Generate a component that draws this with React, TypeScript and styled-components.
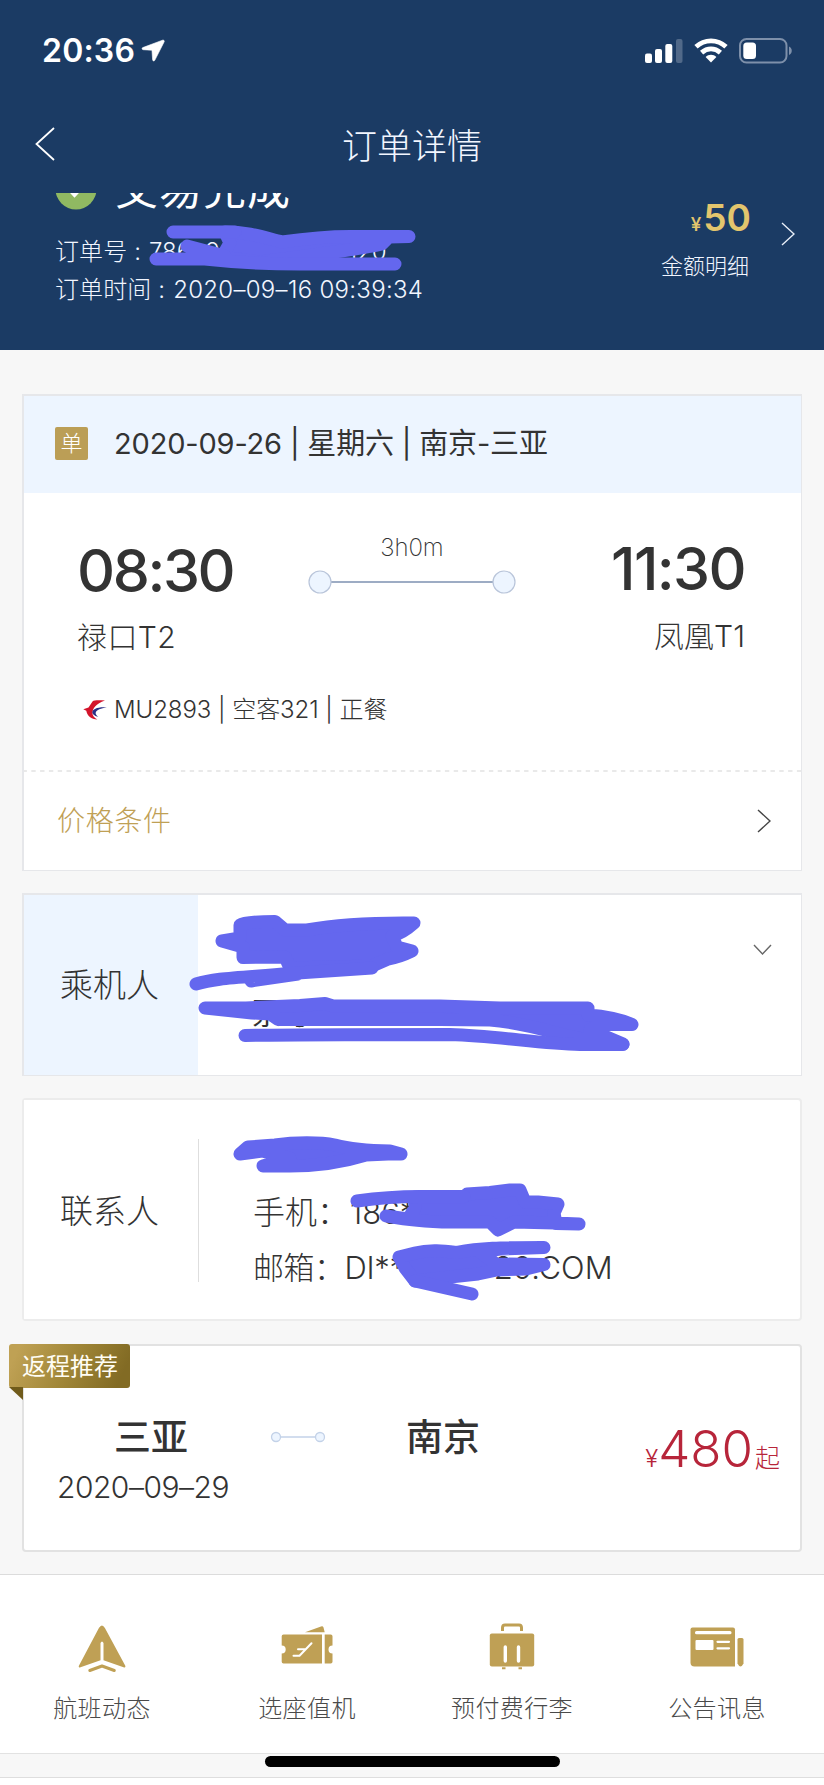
import React from "react";
import styled, { createGlobalStyle } from "styled-components";

const navy = "#1b3b64";
const gold = "#bfa055";
const ink = "#333333";
const pale = "#edf5ff";

const GlobalStyle = createGlobalStyle`
  * { box-sizing: border-box; }
  body { margin: 0; background: #f7f7f7; }
  svg { display: block; flex: none; }
`;

const Page = styled.div`
  position: relative;
  width: 824px;
  height: 1785px;
  display: flex;
  flex-direction: column;
  overflow: hidden;
  background: #f7f7f7;
  color: ${ink};
  font-family: Inter, "Noto Sans CJK SC", sans-serif;
  font-weight: 300;
`;

const Text = styled.span<{
  $size: number;
  $line?: number;
  $weight?: number;
  $track?: number;
  $color?: string;
  $ml?: number;
}>`
  display: block;
  white-space: pre;
  font-size: ${(p) => p.$size}px;
  line-height: ${(p) => p.$line ?? 40}px;
  font-weight: ${(p) => p.$weight ?? 300};
  letter-spacing: ${(p) => p.$track ?? 0}px;
  color: ${(p) => p.$color ?? "inherit"};
  margin-left: ${(p) => p.$ml ?? 0}px;
`;

const Header = styled.header`
  height: 350px;
  flex: none;
  background: ${navy};
  color: #f2f6ff;
`;

const StatusBar = styled.div`
  height: 101px;
  display: flex;
  align-items: center;
  padding: 0 31px 0 42px;
`;

const StatusIcons = styled.div`
  margin-left: auto;
  display: flex;
  align-items: center;
  gap: 11px;
`;

const NavBar = styled.div`
  height: 92px;
  display: grid;
  grid-template-columns: 100px 1fr 100px;
  align-items: center;
  justify-items: center;
  padding-bottom: 3px;
`;

const BackButton = styled.div`
  justify-self: start;
  padding: 0 0 3px 35px;
`;

const Overview = styled.div`
  height: 156px;
  overflow: hidden;
  display: flex;
  padding: 0 29px 0 55px;
`;

const OverviewInfo = styled.div`
  margin-top: -26px;
`;

const StatusLine = styled.div`
  display: flex;
  align-items: center;
  height: 44px;
  margin-bottom: 22px;
`;

const InfoLine = styled.div`
  display: flex;
`;

const Amount = styled.div`
  margin: 5px 0 0 auto;
  display: flex;
  flex-direction: column;
  align-items: flex-end;
`;

const Price = styled.div<{ $color: string; $shift?: number }>`
  display: flex;
  align-items: baseline;
  margin-right: ${(p) => -(p.$shift ?? 0)}px;
  color: ${(p) => p.$color};
`;

const AmountArrow = styled.div`
  padding: 29px 0 0 32px;
`;

const Cards = styled.main`
  flex: 1;
  padding: 44px 22px 0;
`;

const Card = styled.section<{ $height: number; $gap: number; $round?: boolean }>`
  height: ${(p) => p.$height}px;
  margin-bottom: ${(p) => p.$gap}px;
  background: #fff;
  border: 2px solid #e6e7ea;
  border-width: ${(p) => (p.$round ? "2px" : "2px 1px 1px 2px")};
  border-radius: ${(p) => (p.$round ? 4 : 0)}px;
`;

const ContactCard = styled(Card)`
  border-color: #ececec;
`;

const FlightHead = styled.div`
  height: 97px;
  display: flex;
  align-items: center;
  padding: 0 0 2px 31px;
  background: ${pale};
`;

const TripBadge = styled.div`
  width: 33px;
  height: 33px;
  border-radius: 2px;
  display: flex;
  justify-content: center;
  background: #bb9e56;
  margin-right: 26px;
`;

const FlightBody = styled.div`
  height: 277px;
  padding: 47px 56px 0 53px;
`;

const Route = styled.div`
  display: flex;
  justify-content: space-between;
  height: 150px;
`;

const Stop = styled.div<{ $end?: boolean }>`
  display: flex;
  flex-direction: column;
  gap: 15px;
  align-items: ${(p) => (p.$end ? "flex-end" : "flex-start")};
  width: 230px;
`;

const Duration = styled.div`
  width: 208px;
  display: flex;
  flex-direction: column;
  align-items: center;
  gap: 6px;
  margin: -8px 0 0 1px;
`;

const PlaneLine = styled.div`
  display: flex;
  align-items: center;
  padding-left: 6px;
`;

const PriceRow = styled.div`
  height: 98px;
  display: flex;
  align-items: center;
  justify-content: space-between;
  padding: 0 30px 0 33px;
`;

const CardRow = styled.div`
  display: flex;
  height: 100%;
`;

const SideLabel = styled.div<{ $tint?: boolean }>`
  width: 174px;
  padding: ${(p) => (p.$tint ? 0 : 3)}px 0 0 36px;
  display: flex;
  align-items: center;
  background: ${(p) => (p.$tint ? pale : "#fff")};
`;

const Divider = styled.div`
  width: 1px;
  background: #dedede;
  margin: 39px 0 37px;
`;

const Details = styled.div<{ $top: number }>`
  flex: 1;
  padding: ${(p) => p.$top}px 0 0 54px;
`;

const DetailLine = styled.div<{ $height: number }>`
  display: flex;
  align-items: center;
  height: ${(p) => p.$height}px;
`;

const ExpandArrow = styled.div`
  padding: 49px 29px 0 0;
`;

const ReturnCard = styled(Card)`
  position: relative;
  display: flex;
  border-color: #e2e2e2;
`;

const Ribbon = styled.div`
  position: absolute;
  left: -15px;
  top: -2px;
  width: 121px;
  height: 44px;
  border-radius: 3px;
  padding-left: 13px;
  background: linear-gradient(115deg, #bfa154 8%, #a08637 50%, #826b24 90%);
`;

const RibbonFold = styled.svg`
  position: absolute;
  left: 0;
  top: 43px;
`;

const City = styled.div<{ $width: number }>`
  width: ${(p) => p.$width}px;
  padding: 72px 0 0 33px;
  display: flex;
  flex-direction: column;
  gap: 9px;
`;

const MiniRoute = styled.div`
  padding-top: 85px;
  width: 137px;
`;

const Fare = styled.div`
  margin: 65px 20px 0 auto;
`;

const TabBar = styled.nav`
  height: 180px;
  flex: none;
  display: flex;
  background: #fff;
  border-top: 1px solid #dcdcdc;
  border-bottom: 1px solid #e2e2e2;
`;

const Tab = styled.div`
  width: 205px;
  display: flex;
  flex-direction: column;
  align-items: center;
  padding: 48px 1px 0 0;
`;

const HomeArea = styled.div`
  height: 24px;
  flex: none;
  display: flex;
  justify-content: center;
  padding-top: 2px;
  border-bottom: 1px solid #dedede;
`;

const HomeIndicator = styled.div`
  width: 295px;
  height: 11px;
  border-radius: 6px;
  background: #000;
`;

const BottomStrip = styled.div`
  height: 7px;
  flex: none;
  background: #fff;
`;

const Marker = styled.svg`
  position: absolute;
  left: 0;
  top: 0;
  pointer-events: none;
`;

const ArrowGlyph = styled.svg`
  margin-left: 6px;
`;

const LocationArrow = () => (
  <ArrowGlyph width="24" height="24" viewBox="0 0 24 24">
    <path d="M21.500 1.200 1.800 8.600c-1.200.5-.9 2 .3 2.100l8.300.5c.4 0 .6.2.6.6l.6 8.900c.1 1.400 1.700 1.700 2.300.4L23.200 2.700c.4-1-.6-1.900-1.700-1.500z" fill="#fff" stroke="#fff" strokeWidth=".6" />
  </ArrowGlyph>
);

const SignalIcon = () => (
  <svg width="38" height="24" viewBox="0 0 38 24" fill="#fff">
    <rect x="0" y="14.500" width="7" height="9.500" rx="2" />
    <rect x="10" y="10" width="7" height="14" rx="2" />
    <rect x="20.300" y="5" width="7" height="19" rx="2" />
    <rect x="31" y="0" width="6.500" height="24" rx="2" opacity=".24" />
  </svg>
);

const WifiIcon = () => (
  <svg width="34" height="25" viewBox="0 0 34 25" fill="none" stroke="#fff">
    <path d="M2 8.800C10.500.8 23.500.8 32 8.800" strokeWidth="4.800" />
    <path d="M7.600 14.600c5.600-5 13.200-5 18.800 0" strokeWidth="4.800" />
    <path d="M17 24.500l-5.400-5.600c3-2.800 7.800-2.800 10.800 0z" fill="#fff" stroke="none" />
  </svg>
);

const BatteryIcon = () => (
  <svg width="54" height="26" viewBox="0 0 54 26">
    <rect x="1" y="1" width="46.500" height="23.500" rx="6.500" fill="none" stroke="#7e90aa" strokeWidth="2" />
    <rect x="4.300" y="4.500" width="12.700" height="16.500" rx="3.500" fill="#fff" />
    <path d="M50 8.500c3.700 1.200 3.700 7.300 0 8.500z" fill="#7e90aa" />
  </svg>
);

const Chevron = ({ w, h, d, color, width = 1.4 }: { w: number; h: number; d: string; color: string; width?: number }) => (
  <svg width={w} height={h} viewBox={`0 0 ${w} ${h}`} fill="none" stroke={color} strokeWidth={width}>
    <path d={d} />
  </svg>
);

const CheckCircle = () => (
  <svg width="42" height="42" viewBox="0 0 42 42">
    <circle cx="21" cy="21" r="20.500" fill="#90b962" />
    <path d="M11 18.500l8.500 9L28 18.500" fill="none" stroke="#fff" strokeWidth="3" />
  </svg>
);

const FlightPath = () => (
  <svg width="208" height="24" viewBox="0 0 208 24">
    <path d="M23 12h162" stroke="#7c90b0" strokeWidth="1.300" />
    <circle cx="12" cy="12" r="11" fill={pale} stroke="#b9c5da" strokeWidth="1.200" />
    <circle cx="196" cy="12" r="11" fill={pale} stroke="#b9c5da" strokeWidth="1.200" />
  </svg>
);

const AirlineLogo = () => (
  <svg width="24" height="20" viewBox="0 0 24 20">
    <path d="M22 .5C16 .3 11 0 9.500 1.500L5.500 7.500.3 9.200l3 1.600c.8 5 5 8.500 11 8.700-3.300-2-5.300-4.500-4.800-7.500C10 8.500 12.500 4 22 .5z" fill="#d3142b" />
    <path d="M23.800 7.300C15 6.500 9.500 9 9.300 12.200c0 2 3 4 6 4.600-2-1.500-3.100-3-2.500-4.500.8-2.200 5-4 11-5z" fill="#2a2f85" />
  </svg>
);

const DashLine = () => (
  <svg width="777" height="2" viewBox="0 0 777 2">
    <path d="M0 1h777" stroke="#e2e2e2" strokeWidth="1.500" strokeDasharray="4.400 4.400" strokeDashoffset="1.500" />
  </svg>
);

const MiniPath = () => (
  <svg width="56" height="12" viewBox="0 0 56 12" fill={pale} stroke="#c3d2e8" strokeWidth="1.300">
    <path d="M10 6h36" />
    <circle cx="6" cy="6" r="4.500" />
    <circle cx="50" cy="6" r="4.500" />
  </svg>
);

const PlaneIcon = () => (
  <svg width="50" height="50" viewBox="0 0 50 50">
    <path d="M21.900 5Q25 0 27.900 5L48.300 42.800Q49 45 46.500 44.200L26.500 37.200V20Q25 17 23.500 20V37.200L3.500 44.200Q1 45 1.900 42.800Z" fill={gold} />
    <path d="M12.800 47.500L25 43l12.300 4.500" fill="none" stroke={gold} strokeWidth="3" strokeLinecap="round" strokeLinejoin="round" />
  </svg>
);

const TicketIcon = () => (
  <svg width="52" height="50" viewBox="0 0 52 50">
    <path d="M24 9.200L40 3.400q2-.7 2.500 1.200l1.200 4.600z" fill={gold} />
    <path d="M2.500 11.500H41V40.500H2.500Q.7 40.500.7 38.700V30.500a3.800 3.800 0 0 0 0-8V13.300q0-1.800 1.800-1.800zM43.700 11.500h6q1.800 0 1.800 1.800v9.200a3.800 3.800 0 0 0 0 8v8.200q0 1.800-1.800 1.800h-6z" fill={gold} />
    <path d="M12.500 32.800h6L30.500 20.200M17 26.200h7.500" fill="none" stroke="#fff" strokeWidth="2" strokeLinecap="round" strokeLinejoin="round" />
  </svg>
);

const LuggageIcon = () => (
  <svg width="46" height="50" viewBox="0 0 46 50">
    <path d="M13.500 8V4.800Q13.500 2 16 2h14q2.500 0 2.500 2.800V8" fill="none" stroke={gold} strokeWidth="3" />
    <rect x=".8" y="10.500" width="44.400" height="33" rx="2" fill={gold} />
    <path d="M16.300 24v14M29.500 24v14" stroke="#fff" strokeWidth="3.400" strokeLinecap="round" />
    <path d="M13 45.300h3.500M29.500 45.300H33" stroke={gold} strokeWidth="2" />
  </svg>
);

const NewsIcon = () => (
  <svg width="54" height="50" viewBox="0 0 54 50">
    <path d="M2.500 4.500H43q2 0 2 2V43.500H4.500Q.5 43.500.5 39.500V6.500q0-2 2-2z" fill={gold} />
    <path d="M47.500 16.500q0-1.500 1.500-1.500h3q1.500 0 1.500 1.500V40.500q-3 6-6 0z" fill={gold} />
    <rect x="5" y="8" width="36.500" height="3.300" rx="1.500" fill="#fff" />
    <rect x="5.500" y="17" width="18" height="10" rx="1" fill="#fff" />
    <path d="M27.500 18.800h11.500M27.500 25.300h11.500" stroke="#fff" strokeWidth="2.200" strokeLinecap="round" />
  </svg>
);

const tabs = [
  { label: "航班动态", Icon: PlaneIcon },
  { label: "选座值机", Icon: TicketIcon },
  { label: "预付费行李", Icon: LuggageIcon },
  { label: "公告讯息", Icon: NewsIcon },
];

const solidStrokes = [
  "M225 232C250 232 265 238 282 242C310 238 330 236.500 350 236.500H409L389 237L382 244C360 249 340 251 320 254L260 262L222 257L230 243Z",
  "M240 925Q245 921.500 275 921.500L285 930L307 930C340 924 370 922.500 414 923Q403 933 392 936L397 947L412 951Q400 957 388 959L372 966L290 968L285 957L243 957.500L243 947L222 941L240 938Z",
  "M205 1008L246 1008L300 1005.500L325 1003.500L333 1006H440L500 1008H588V1015Q615 1017 632 1024.500L600 1024.500L590 1030L623 1044L590 1040C560 1036 530 1023 490 1020L440 1019.500H278L270 1014L252 1013Z",
  "M240 1154L248 1147L275 1145C295 1142 320 1142 335 1145C350 1149 365 1150.500 390 1151L401 1154L388 1154L366 1155C340 1163 310 1166 290 1166H263L290 1158L262 1151Z",
  "M415 1197H464L467 1194L490 1192.500L510 1190H520L525 1202L538 1202L558 1204L554 1213L556 1223.500L579 1224L555 1223L514 1222L498 1230L490 1222H442C420 1221 400 1219 386 1216L408 1219L415 1208Z",
  "M399 1257L415 1253C430 1249 445 1251 457 1252.500C480 1248 500 1247.500 544 1247.500L500 1249L480 1252L496 1264L544 1264.500L526 1269L497 1270L478 1274L450 1277L415 1281L405 1268Z",
];

const lineStrokes = [
  "M173 232H235M187 246L225 256M156 259H205C250 264 280 264 300 264H395",
  "M196 984C215 978 235 978 290 973.500L372 968M251 981L298 974",
  "M245 1035.500C300 1034.500 400 1034.500 450 1034.500C500 1036 540 1044 580 1044.500H623",
  "M357 1201C385 1197 400 1196.500 420 1196.500H464M415 1281L472 1294",
];

const MarkerStrokes = () => (
  <Marker width="824" height="1785" viewBox="0 0 824 1785" stroke="#6467ee" strokeWidth="13" strokeLinecap="round" strokeLinejoin="round">
    {solidStrokes.map((d) => (
      <path key={d} d={d} fill="#6467ee" />
    ))}
    {lineStrokes.map((d) => (
      <path key={d} d={d} fill="none" />
    ))}
  </Marker>
);

export default function App() {
  return (
    <Page>
      <GlobalStyle />
      <Header>
        <StatusBar>
          <Text $size={32} $weight={600} $track={0.2} $color="#fff">20:36</Text>
          <LocationArrow />
          <StatusIcons>
            <SignalIcon />
            <WifiIcon />
            <BatteryIcon />
          </StatusIcons>
        </StatusBar>
        <NavBar>
          <BackButton>
            <Chevron w={20} h={34} d="M19 1L1.500 17L19 33" color="#fff" width={1.8} />
          </BackButton>
          <Text $size={35}>订单详情</Text>
        </NavBar>
        <Overview>
          <OverviewInfo>
            <StatusLine>
              <CheckCircle />
              <Text $size={43} $weight={400} $track={1} $line={44} $ml={18} $color="#fff">交易完成</Text>
            </StatusLine>
            <InfoLine>
              <Text $size={24} $line={38} $track={0.1}>订单号 :</Text>
              <Text $size={24} $line={38} $ml={8}>786</Text>
              <Text $size={24} $line={38} $ml={14}>9</Text>
              <Text $size={24} $line={38} $ml={128}>120</Text>
            </InfoLine>
            <InfoLine>
              <Text $size={24} $line={38} $track={0.1}>订单时间 :</Text>
              <Text $size={24} $line={38} $track={0.3} $ml={8}>2020–09–16 09:39:34</Text>
            </InfoLine>
          </OverviewInfo>
          <Amount>
            <Price $color="#e3c56d" $shift={2}>
              <Text $size={19} $weight={500}>¥</Text>
              <Text $size={37} $weight={600} $ml={2}>50</Text>
            </Price>
            <Text $size={22} $line={43}>金额明细</Text>
          </Amount>
          <AmountArrow>
            <Chevron w={14} h={24} d="M1 1L13 12L1 23" color="#e8eef8" />
          </AmountArrow>
        </Overview>
      </Header>

      <Cards>
        <Card $height={477} $gap={22}>
          <FlightHead>
            <TripBadge>
              <Text $size={22} $line={33} $color="#fff">单</Text>
            </TripBadge>
            <Text $size={29} $weight={400} $track={-0.17}>2020-09-26 | 星期六 | 南京-三亚</Text>
          </FlightHead>
          <FlightBody>
            <Route>
              <Stop>
                <Text $size={59} $line={62} $weight={500} $track={-2.4}>08:30</Text>
                <Text $size={30} $line={40} $track={0.4}>禄口T2</Text>
              </Stop>
              <Duration>
                <Text $size={24} $line={32} $weight={250} $ml={1} $track={-0.1}>3h0m</Text>
                <FlightPath />
              </Duration>
              <Stop $end>
                <Text $size={59} $line={58} $weight={500} $track={-1.6}>11:30</Text>
                <Text $size={30} $line={46}>凤凰T1</Text>
              </Stop>
            </Route>
            <PlaneLine>
              <AirlineLogo />
              <Text $size={24} $track={-0.05} $ml={7}>MU2893 | 空客321 | 正餐</Text>
            </PlaneLine>
          </FlightBody>
          <DashLine />
          <PriceRow>
            <Text $size={28} $track={0.7} $color={gold}>价格条件</Text>
            <Chevron w={14} h={24} d="M1 1L13 12L1 23" color="#444" />
          </PriceRow>
        </Card>

        <Card $height={183} $gap={22}>
          <CardRow>
            <SideLabel $tint>
              <Text $size={33}>乘机人</Text>
            </SideLabel>
            <Details $top={98}>
              <Text $size={30} $weight={400}>票号</Text>
            </Details>
            <ExpandArrow>
              <Chevron w={19} h={12} d="M1 1L9.500 10L18 1" color="#666" />
            </ExpandArrow>
          </CardRow>
        </Card>

        <ContactCard $height={223} $gap={23} $round>
          <CardRow>
            <SideLabel>
              <Text $size={33}>联系人</Text>
            </SideLabel>
            <Divider />
            <Details $top={85}>
              <DetailLine $height={56}>
                <Text $size={32}>手机：</Text>
                <Text $size={31} $weight={280} $ml={1}>186*</Text>
              </DetailLine>
              <DetailLine $height={54}>
                <Text $size={31} $track={-0.5}>邮箱：</Text>
                <Text $size={31} $weight={280} $track={-0.3}>DI**</Text>
                <Text $size={31} $weight={280} $ml={89}>20.COM</Text>
              </DetailLine>
            </Details>
          </CardRow>
        </ContactCard>

        <ReturnCard $height={208} $gap={0} $round>
          <Ribbon>
            <RibbonFold width="15" height="14" viewBox="0 0 15 14">
              <path d="M0 0H14V13z" fill="#705b1b" />
            </RibbonFold>
            <Text $size={24} $line={45} $weight={400} $color="#fffdf4">返程推荐</Text>
          </Ribbon>
          <City $width={246}>
            <Text $size={37} $weight={500} $ml={57}>三亚</Text>
            <Text $size={30} $weight={280} $track={-0.5}>2020–09–29</Text>
          </City>
          <MiniRoute>
            <MiniPath />
          </MiniRoute>
          <City $width={110}>
            <Text $size={37} $weight={500} $ml={-34}>南京</Text>
          </City>
          <Fare>
            <Price $color="#b7253a">
              <Text $size={24}>¥</Text>
              <Text $size={51} $line={76} $weight={270}>480</Text>
              <Text $size={25} $ml={2}>起</Text>
            </Price>
          </Fare>
        </ReturnCard>
      </Cards>

      <TabBar>
        {tabs.map(({ label, Icon }) => (
          <Tab key={label}>
            <Icon />
            <Text $size={24} $line={72} $track={0.4} $color="#4a4a4a">{label}</Text>
          </Tab>
        ))}
      </TabBar>
      <HomeArea>
        <HomeIndicator />
      </HomeArea>
      <BottomStrip />
      <MarkerStrokes />
    </Page>
  );
}
